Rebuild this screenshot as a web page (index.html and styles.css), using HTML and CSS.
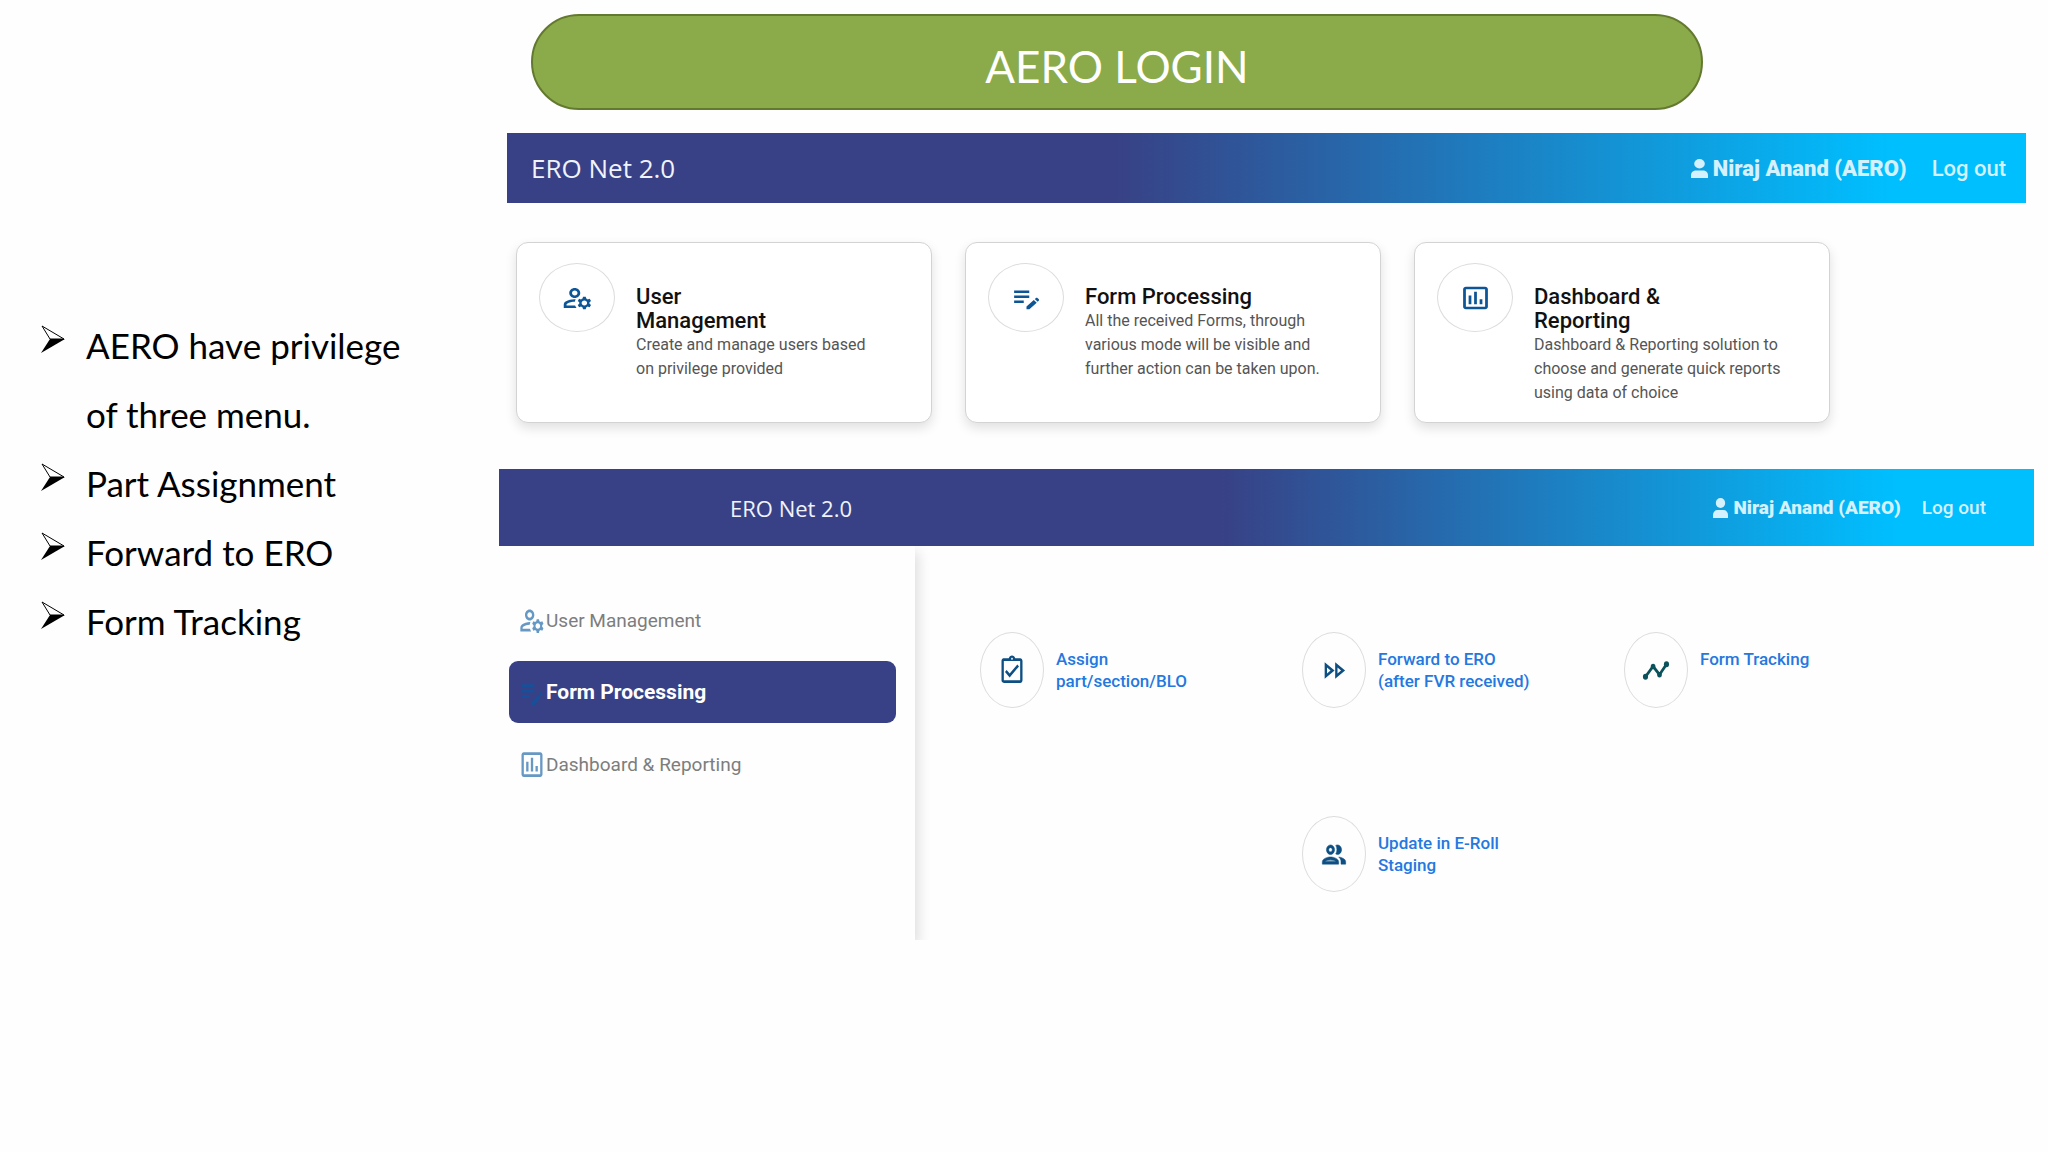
FILE: index.html
```html
<!DOCTYPE html>
<html lang="en">
<head>
  <meta charset="UTF-8" />
  <title>AERO Login</title>
  <link rel="stylesheet" href="styles.css">
</head>
<body>
  <!-- shared icons -->
  <svg class="sprite" aria-hidden="true">
    <symbol id="i-users" viewBox="0 0 24 24" preserveAspectRatio="none"><path d="M4 18v-.65c0-.34.16-.66.41-.81C6.1 15.53 8.03 15 10 15c.03 0 .05 0 .08.01.1-.7.3-1.37.59-1.98-.22-.02-.44-.03-.67-.03-2.42 0-4.68.67-6.61 1.82-.88.52-1.39 1.5-1.39 2.53V20h9.26c-.42-.6-.75-1.28-.97-2H4zM10 12c2.21 0 4-1.79 4-4s-1.79-4-4-4-4 1.79-4 4 1.79 4 4 4zm0-6c1.1 0 2 .9 2 2s-.9 2-2 2-2-.9-2-2 .9-2 2-2zM20.75 16c0-.22-.03-.42-.06-.63l1.14-1.01-1-1.73-1.45.49c-.32-.27-.68-.48-1.08-.63L18 11h-2l-.3 1.49c-.4.15-.76.36-1.08.63l-1.45-.49-1 1.73 1.14 1.01c-.03.21-.06.41-.06.63s.03.42.06.63l-1.14 1.01 1 1.73 1.45-.49c.32.27.68.48 1.08.63L16 21h2l.3-1.49c.4-.15.76-.36 1.08-.63l1.45.49 1-1.73-1.14-1.01c.03-.21.06-.41.06-.63zM17 18c-1.1 0-2-.9-2-2s.9-2 2-2 2 .9 2 2-.9 2-2 2z"/></symbol>
    <symbol id="i-edit" viewBox="0 0 24 24" preserveAspectRatio="none"><path d="M3 10h11v2H3v-2zm0-2h11V6H3v2zm0 8h7v-2H3v2zm15.01-3.13.71-.71c.39-.39 1.02-.39 1.41 0l.71.71c.39.39.39 1.02 0 1.41l-.71.71-2.12-2.12zm-.71.71-5.3 5.3V21h2.12l5.3-5.3-2.12-2.12z"/></symbol>
    <symbol id="i-chart" viewBox="0 0 24 24" preserveAspectRatio="none"><path d="M19 3H5c-1.1 0-2 .9-2 2v14c0 1.1.9 2 2 2h14c1.1 0 2-.9 2-2V5c0-1.1-.9-2-2-2zm0 16H5V5h14v14zM7 10h2v7H7zM11 7h2v10h-2zM15 13h2v4h-2z"/></symbol>
    <symbol id="i-assign" viewBox="0 0 24 24" preserveAspectRatio="none"><path d="M18 9l-1.41-1.42L10 14.17l-2.59-2.58L6 13l4 4zM19 3h-4.18C14.4 1.84 13.3 1 12 1c-1.3 0-2.4.84-2.82 2H5c-.14 0-.27.01-.4.04-.39.08-.74.28-1.01.55-.18.18-.33.4-.43.64-.1.23-.16.49-.16.77v14c0 .27.06.54.16.78s.25.45.43.64c.27.27.62.47 1.01.55.13.02.26.03.4.03h14c1.1 0 2-.9 2-2V5c0-1.1-.9-2-2-2zm-7-.25c.41 0 .75.34.75.75s-.34.75-.75.75-.75-.34-.75-.75.34-.75.75-.75zM19 19H5V5h14v14z"/></symbol>
    <symbol id="i-forward" viewBox="0 0 24 24" preserveAspectRatio="none"><path d="M15 9.86 18.03 12 15 14.14V9.86m-9 0L9.03 12 6 14.14V9.86M13 6v12l8.5-6L13 6zM4 6v12l8.5-6L4 6z"/></symbol>
    <symbol id="i-group" viewBox="0 0 24 24" preserveAspectRatio="none"><path d="M4.340 17c.84-.58 2.870-1.250 4.660-1.250s3.820.67 4.660 1.250z" opacity=".4"/><path d="M9 13.750c-2.340 0-7 1.170-7 3.500V19h14v-1.750c0-2.330-4.660-3.500-7-3.500zM4.340 17c.84-.58 2.870-1.250 4.660-1.250s3.820.67 4.660 1.250H4.340zM9 12c1.930 0 3.500-1.570 3.500-3.500S10.930 5 9 5 5.500 6.570 5.500 8.500 7.070 12 9 12zm0-5c.83 0 1.500.67 1.500 1.500S9.830 10 9 10s-1.500-.67-1.500-1.500S8.170 7 9 7zm7.040 6.810c1.160.84 1.960 1.960 1.960 3.440V19h4v-1.750c0-2.020-3.500-3.170-5.960-3.440zM15 12c1.930 0 3.500-1.570 3.500-3.500S16.930 5 15 5c-.54 0-1.040.13-1.500.35.63.89 1 1.980 1 3.150s-.37 2.260-1 3.150c.46.22.96.35 1.500.35z" stroke="currentColor" stroke-width=".4"/></symbol>
    <symbol id="i-track" viewBox="0 0 24 24" preserveAspectRatio="none"><path d="M3 16.500 9.500 9l5.500 6L21 7.500" fill="none" stroke="currentColor" stroke-width="2.200"/><circle cx="3" cy="16.500" r="2.200"/><circle cx="9.500" cy="9" r="2"/><circle cx="15" cy="15" r="2"/><circle cx="21" cy="7.500" r="2.200"/></symbol>
    <symbol id="i-person" viewBox="0 0 16 20" preserveAspectRatio="none"><ellipse cx="8" cy="5" rx="5" ry="5"/><path d="M0 20v-3c0-3 2-5 5-5h6c3 0 5 2 5 5v3z"/></symbol>
    <symbol id="i-arrow" viewBox="0 0 24 28"><path d="M1 1l22 13H9z" fill="none" stroke="currentColor"/><path d="M9 14h15L0 28z"/></symbol>
  </svg>

  <div class="slide">
    <div class="notes">
      <ul>
        <li><svg><use href="#i-arrow"/></svg><span>AERO have privilege of three menu.</span></li>
        <li><svg><use href="#i-arrow"/></svg><span>Part Assignment</span></li>
        <li><svg><use href="#i-arrow"/></svg><span>Forward to ERO</span></li>
        <li><svg><use href="#i-arrow"/></svg><span>Form Tracking</span></li>
      </ul>
    </div>

    <div class="content">
      <h1 class="banner">AERO LOGIN</h1>

      <!-- home screen -->
      <section class="home">
        <header class="topbar">
          <span class="brand">ERO Net 2.0</span>
          <nav class="account">
            <a href="#" class="user"><svg><use href="#i-person"/></svg>Niraj Anand (AERO)</a>
            <a href="#">Log out</a>
          </nav>
        </header>
        <div class="cards">
          <div class="card">
            <div class="circle"><svg><use href="#i-users"/></svg></div>
            <div class="card-text">
              <h2>User<br>Management</h2>
              <p>Create and manage users based<br>on privilege provided</p>
            </div>
          </div>
          <div class="card">
            <div class="circle"><svg><use href="#i-edit"/></svg></div>
            <div class="card-text">
              <h2>Form Processing</h2>
              <p>All the received Forms, through<br>various mode will be visible and<br>further action can be taken upon.</p>
            </div>
          </div>
          <div class="card">
            <div class="circle"><svg><use href="#i-chart"/></svg></div>
            <div class="card-text">
              <h2>Dashboard &amp;<br>Reporting</h2>
              <p>Dashboard &amp; Reporting solution to<br>choose and generate quick reports<br>using data of choice</p>
            </div>
          </div>
        </div>
      </section>

      <!-- form processing screen -->
      <section class="forms">
        <header class="topbar">
          <span class="brand">ERO Net 2.0</span>
          <nav class="account">
            <a href="#" class="user"><svg><use href="#i-person"/></svg>Niraj Anand (AERO)</a>
            <a href="#">Log out</a>
          </nav>
        </header>
        <div class="panel">
          <nav class="sidebar">
            <a href="#"><svg><use href="#i-users"/></svg>User Management</a>
            <a href="#" class="active"><svg><use href="#i-edit"/></svg>Form Processing</a>
            <a href="#"><svg><use href="#i-chart"/></svg>Dashboard &amp; Reporting</a>
          </nav>
          <div class="tiles">
            <a href="#" class="tile"><span class="circle"><svg><use href="#i-assign"/></svg></span><span>Assign<br>part/section/BLO</span></a>
            <a href="#" class="tile"><span class="circle"><svg><use href="#i-forward"/></svg></span><span>Forward to ERO<br>(after FVR received)</span></a>
            <a href="#" class="tile track"><span class="circle"><svg><use href="#i-track"/></svg></span><span>Form Tracking</span></a>
            <a href="#" class="tile second-row"><span class="circle"><svg><use href="#i-group"/></svg></span><span>Update in E-Roll<br>Staging</span></a>
          </div>
        </div>
      </section>
    </div>
  </div>
</body>
</html>
```
FILE: styles.css
```css
* {
  box-sizing: border-box;
}
body {
  margin: 0;
  background: #fefefe;
  font-family: Roboto, "Liberation Sans", sans-serif;
}
a {
  color: inherit;
  text-decoration: none;
}
svg {
  fill: currentColor;
  flex: none;
}
.sprite {
  display: none;
}
.slide {
  display: flex;
}

/* left notes */
.notes {
  flex: none;
  width: 499px;
  padding: 311px 72px 0 41px;
  font-family: Lato, sans-serif;
  font-size: 35px;
  line-height: 69px;
  color: #000;
}
.notes ul {
  margin: 0;
  padding: 0;
  list-style: none;
}
.notes li {
  display: flex;
  gap: 21px;
}
.notes svg {
  width: 24px;
  height: 28px;
  margin-top: 14px;
}

.content {
  flex: 1;
  padding: 14px 14px 0 0;
}
.banner {
  margin: 0 331px 23px 32px;
  height: 96px;
  border: 2px solid #63792f;
  border-radius: 48px;
  background: #8bab4a;
  color: #fff;
  font-family: Lato, sans-serif;
  font-weight: 400;
  font-size: 44px;
  line-height: 100px;
  text-align: center;
}

/* blue bars */
.topbar {
  display: flex;
  align-items: center;
  justify-content: space-between;
  height: 70px;
  padding: 0 20px 0 24px;
  background: linear-gradient(90deg, #384185 40%, #00bfff 91%);
  color: #d5f1fd;
}
.brand {
  font-family: "Open Sans", sans-serif;
  font-size: 26px;
  color: #f0f3fc;
}
.account {
  display: flex;
  gap: 25px;
  font-size: 22px;
  font-weight: 500;
}
.user {
  display: flex;
  align-items: center;
  gap: 5px;
  font-weight: 900;
}
.user svg {
  width: 17px;
  height: 19px;
}

/* home screen */
.home {
  margin: 0 8px 46px;
}
.cards {
  display: grid;
  grid-template-columns: repeat(3, 1fr);
  gap: 33px;
  padding: 39px 196px 0 9px;
}
.card {
  display: flex;
  align-items: flex-start;
  gap: 21px;
  min-height: 181px;
  padding: 20px 22px 12px;
  border: 1px solid #d3d3d3;
  border-radius: 12px;
  background: #fff;
  box-shadow: 0 5px 12px rgba(0, 0, 0, 0.12);
}
.circle {
  display: flex;
  flex: none;
  align-items: center;
  justify-content: center;
  width: 76px;
  height: 69px;
  border: 1px solid #dcdcdc;
  border-radius: 50%;
  color: #0c5596;
}
.circle svg {
  width: 33px;
  height: 30px;
}
.card-text {
  padding-top: 22px;
}
.card h2 {
  margin: 0;
  font-size: 22px;
  font-weight: 500;
  line-height: 24px;
  color: #111;
}
.card p {
  margin: 0;
  font-size: 16px;
  line-height: 24px;
  color: #555;
}

/* form processing screen */
.forms .topbar {
  height: 77px;
  padding: 0 48px 0 231px;
  background: linear-gradient(90deg, #384185 47%, #00bfff 91%);
}
.forms .brand {
  font-size: 22px;
}
.forms .account {
  gap: 21px;
  font-size: 19px;
}
.forms .user svg {
  width: 15px;
  height: 20px;
}
.panel {
  display: flex;
  min-height: 394px;
  overflow: hidden;
}
.sidebar {
  display: flex;
  flex-direction: column;
  flex: none;
  gap: 10px;
  width: 416px;
  padding: 43px 19px 0 10px;
  box-shadow: 4px 6px 12px rgba(0, 0, 0, 0.12);
}
.sidebar a {
  display: flex;
  align-items: center;
  height: 62px;
  padding: 0 9px;
  border-radius: 9px;
  font-size: 19px;
  color: #7d7d7d;
}
.sidebar svg {
  width: 28px;
  height: 33px;
  color: #6698c4;
}
.sidebar .active {
  background: #384185;
  color: #fff;
  font-size: 21px;
  font-weight: 700;
}
.sidebar .active svg {
  color: #17509a;
}
.tiles {
  display: grid;
  flex: 1;
  grid-template-columns: repeat(3, 322px);
  grid-auto-rows: 76px;
  row-gap: 108px;
  padding: 86px 0 0 65px;
}
.tile {
  display: flex;
  gap: 12px;
  font-size: 17px;
  font-weight: 500;
  line-height: 22px;
  color: #2478e0;
}
.tile > span:last-child {
  padding-top: 16px;
}
.tile .circle {
  width: 64px;
  height: 76px;
  color: #0d4f82;
}
.tile .circle svg {
  width: 28px;
  height: 33px;
}
.track .circle {
  color: #0b525c;
}
.second-row {
  grid-column: 2;
}
```
